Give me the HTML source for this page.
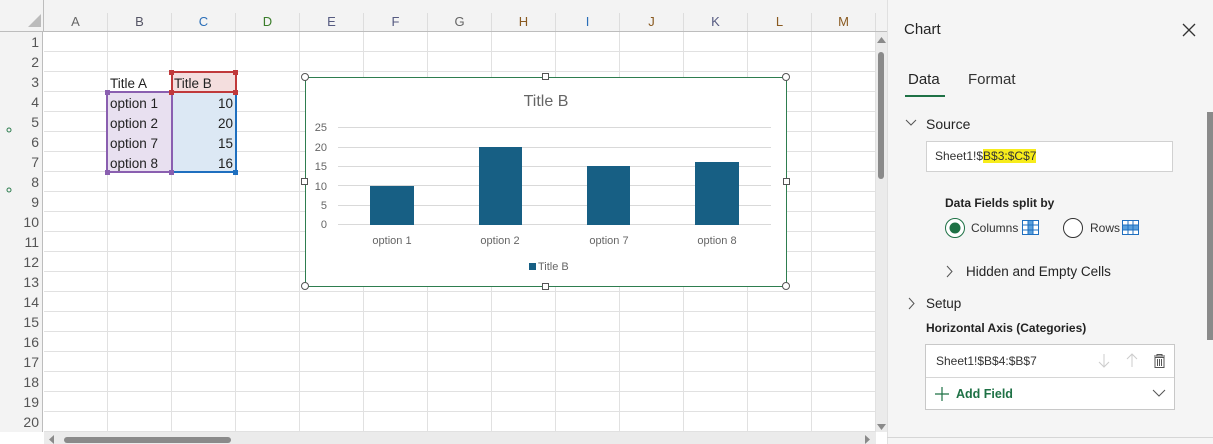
<!DOCTYPE html>
<html><head><style>
*{margin:0;padding:0;box-sizing:border-box}
body{width:1213px;height:444px;overflow:hidden;background:#fff;font-family:"Liberation Sans",sans-serif;position:relative}
.a{position:absolute}
.ch{position:absolute;top:13px;height:18px;text-align:center;font-size:13px;color:#555;line-height:18px;border-right:1px solid #ddd}
.rh{position:absolute;left:0;width:43px;height:20px;text-align:right;padding-right:4px;font-size:14px;color:#555;line-height:21px}
.cell{position:absolute;font-size:13.5px;line-height:21px;color:#222}
.p{font-size:14px;color:#242424}
</style></head><body>
<div class="a" style="left:0;top:0;width:887px;height:32px;background:#f3f3f3;border-bottom:1px solid #bdbdbd"></div>
<div class="a" style="left:0;top:32px;width:43px;height:400px;background:#f3f3f3;border-right:1px solid #bdbdbd"></div>
<div class="a" style="left:43px;top:0;width:1px;height:32px;background:#bdbdbd"></div>
<svg class="a" style="left:28px;top:14px" width="14" height="14"><polygon points="13,0 13,13 0,13" fill="#bbb"/></svg>
<div id="cols"></div>
<div id="grid" class="a" style="left:44px;top:32px;width:832px;height:400px;
background-image:linear-gradient(to right,#e1e1e1 1px,transparent 1px),linear-gradient(to bottom,#e1e1e1 1px,transparent 1px);
background-size:64px 20px;background-position:63px 19px"></div>
<div id="rows"></div>
<div class="a" style="left:108px;top:92px;width:64px;height:80px;background:#e8e0f0"></div>
<div class="a" style="left:172px;top:72px;width:64px;height:20px;background:#f4dede"></div>
<div class="a" style="left:172px;top:92px;width:64px;height:80px;background:#dce8f4"></div>
<div class="a" style="left:106px;top:91px;width:67px;height:82px;border:2px solid #8a5fb0"></div>
<div class="a" style="left:171px;top:71px;width:66px;height:22px;border:2px solid #c0393b"></div>
<div class="a" style="left:171px;top:91px;width:66px;height:82px;border:2px solid #1f6fbf;border-left:none;border-top:none"></div>
<div class="cell" style="left:110px;top:73px">Title A</div>
<div class="cell" style="left:174px;top:73px">Title B</div>
<div class="cell" style="left:110px;top:93px">option 1</div>
<div class="cell" style="left:110px;top:113px">option 2</div>
<div class="cell" style="left:110px;top:133px">option 7</div>
<div class="cell" style="left:110px;top:153px">option 8</div>
<div class="cell" style="left:172px;top:93px;width:61px;text-align:right">10</div>
<div class="cell" style="left:172px;top:113px;width:61px;text-align:right">20</div>
<div class="cell" style="left:172px;top:133px;width:61px;text-align:right">15</div>
<div class="cell" style="left:172px;top:153px;width:61px;text-align:right">16</div>
<svg class="a" style="left:104px;top:69px" width="136" height="108">
<g fill="#8a5fb0"><rect x="1" y="21" width="5" height="5"/><rect x="1" y="101" width="5" height="5"/><rect x="65" y="101" width="5" height="5"/></g>
<g fill="#c0393b"><rect x="65" y="1" width="5" height="5"/><rect x="129" y="1" width="5" height="5"/><rect x="65" y="21" width="5" height="5"/><rect x="129" y="21" width="5" height="5"/></g>
<rect x="129" y="101" width="5" height="5" fill="#1f6fbf"/>
</svg>
<svg class="a" style="left:6px;top:127px" width="8" height="66"><circle cx="3" cy="3" r="2" fill="none" stroke="#2e7d4f"/><circle cx="3" cy="63" r="2" fill="none" stroke="#2e7d4f"/></svg>
<div class="a" style="left:305px;top:77px;width:482px;height:210px;background:#fff;border:1px solid #2e7d4f"></div>
<svg class="a" style="left:300px;top:72px" width="492" height="220" font-family="Liberation Sans" >
<g stroke="#d9d9d9"><line x1="38" x2="471" y1="55.5" y2="55.5"/><line x1="38" x2="471" y1="75.5" y2="75.5"/><line x1="38" x2="471" y1="94.5" y2="94.5"/><line x1="38" x2="471" y1="113.5" y2="113.5"/><line x1="38" x2="471" y1="133.5" y2="133.5"/><line x1="38" x2="471" y1="152.5" y2="152.5"/></g>
<g font-size="11" fill="#666" text-anchor="end"><text x="27" y="59">25</text><text x="27" y="79">20</text><text x="27" y="98">15</text><text x="27" y="118">10</text><text x="27" y="137">5</text><text x="27" y="156">0</text></g>
<g fill="#175f84"><rect x="70" y="114" width="44" height="39"/><rect x="179" y="75" width="43" height="78"/><rect x="287" y="94" width="43" height="59"/><rect x="395" y="90" width="44" height="63"/></g>
<g font-size="11" fill="#666" text-anchor="middle"><text x="92" y="172">option 1</text><text x="200" y="172">option 2</text><text x="309" y="172">option 7</text><text x="417" y="172">option 8</text></g>
<text x="246" y="34" font-size="16" fill="#666" text-anchor="middle">Title B</text>
<rect x="229" y="191" width="7" height="7" fill="#175f84"/><text x="238" y="198" font-size="11" fill="#666">Title B</text>
<g fill="#fff" stroke="#555"><circle cx="5" cy="5" r="3.5"/><circle cx="486" cy="5" r="3.5"/><circle cx="5" cy="214" r="3.5"/><circle cx="486" cy="214" r="3.5"/>
<rect x="242.5" y="1.5" width="6" height="6"/><rect x="242.5" y="211.5" width="6" height="6"/><rect x="1.5" y="106.5" width="6" height="6"/><rect x="483.5" y="106.5" width="6" height="6"/></g>
</svg>
<div class="a" style="left:876px;top:32px;width:11px;height:400px;background:#ebebeb"></div>
<div class="a" style="left:878px;top:52px;width:6px;height:127px;background:#8a8a8a;border-radius:3px"></div>
<svg class="a" style="left:876px;top:36px" width="11" height="8"><polygon points="5.5,1 10,7 1,7" fill="#8a8a8a"/></svg>
<svg class="a" style="left:876px;top:423px" width="11" height="8"><polygon points="5.5,7 10,1 1,1" fill="#8a8a8a"/></svg>
<div class="a" style="left:44px;top:432px;width:832px;height:12px;background:#ebebeb"></div>
<div class="a" style="left:64px;top:437px;width:167px;height:6px;background:#8a8a8a;border-radius:3px"></div>
<svg class="a" style="left:48px;top:435px" width="8" height="9"><polygon points="1,4.5 6,0 6,9" fill="#8a8a8a"/></svg>
<svg class="a" style="left:863px;top:435px" width="8" height="9"><polygon points="7,4.5 2,0 2,9" fill="#8a8a8a"/></svg>
<div class="a" style="left:887px;top:0;width:326px;height:444px;background:#f5f5f5;border-left:1px solid #e0e0e0"></div>
<div class="a" style="left:887px;top:437px;width:326px;height:1px;background:#d6d6d6"></div>
<div class="a" style="left:1207px;top:112px;width:6px;height:228px;background:#8a8a8a"></div>
<div class="a p" style="left:904px;top:21px;font-size:15px">Chart</div>
<svg class="a" style="left:1182px;top:23px" width="14" height="14"><path d="M1 1L13 13M13 1L1 13" stroke="#333" stroke-width="1.3"/></svg>
<div class="a p" style="left:908px;top:71px;font-size:15px">Data</div>
<div class="a p" style="left:968px;top:71px;font-size:15px;color:#333">Format</div>
<div class="a" style="left:905px;top:95px;width:40px;height:2px;background:#1e7145"></div>
<svg class="a" style="left:905px;top:119px" width="12" height="8"><path d="M1 1L6 6L11 1" stroke="#555" fill="none"/></svg>
<div class="a p" style="left:926px;top:116px">Source</div>
<div class="a" style="left:926px;top:141px;width:247px;height:31px;background:#fff;border:1px solid #d1d1d1"></div>
<div class="a" style="left:935px;top:149px;font-size:12px;color:#333;line-height:15px">Sheet1!$<span style="background:#f7ec1b">B$3:$C$7</span></div>
<div class="a" style="left:945px;top:196px;font-size:12px;color:#222;font-weight:600">Data Fields split by</div>
<svg class="a" style="left:944px;top:217px" width="22" height="22"><circle cx="11" cy="11" r="9.5" fill="#fff" stroke="#1e7145"/><circle cx="11" cy="11" r="5.5" fill="#1e7145"/></svg>
<div class="a" style="left:971px;top:221px;font-size:12px;color:#333">Columns</div>
<svg class="a" style="left:1022px;top:220px" width="17" height="15"><rect x="0.5" y="0.5" width="16" height="14" fill="#fff" stroke="#1f6fbf"/><rect x="6" y="1" width="5" height="13" fill="#5aa0dd"/><path d="M6 .5V15M11 .5V15M.5 5h16M.5 10h16" stroke="#1f6fbf"/></svg>
<svg class="a" style="left:1062px;top:217px" width="22" height="22"><circle cx="11" cy="11" r="9.5" fill="#fff" stroke="#333"/></svg>
<div class="a" style="left:1090px;top:221px;font-size:12px;color:#333">Rows</div>
<svg class="a" style="left:1122px;top:220px" width="17" height="15"><rect x="0.5" y="0.5" width="16" height="14" fill="#fff" stroke="#1f6fbf"/><rect x="1" y="5" width="15" height="5" fill="#5aa0dd"/><path d="M6 .5V15M11 .5V15M.5 5h16M.5 10h16" stroke="#1f6fbf"/></svg>
<svg class="a" style="left:946px;top:265px" width="8" height="13"><path d="M1 1L6 6.5L1 12" stroke="#555" fill="none"/></svg>
<div class="a p" style="left:966px;top:264px;font-size:13.5px">Hidden and Empty Cells</div>
<svg class="a" style="left:908px;top:297px" width="8" height="13"><path d="M1 1L6 6.5L1 12" stroke="#555" fill="none"/></svg>
<div class="a p" style="left:926px;top:296px;font-size:13.5px">Setup</div>
<div class="a" style="left:926px;top:321px;font-size:12px;color:#222;font-weight:600">Horizontal Axis (Categories)</div>
<div class="a" style="left:925px;top:344px;width:250px;height:66px;background:#fff;border:1px solid #c8c8c8"></div>
<div class="a" style="left:926px;top:377px;width:248px;height:1px;background:#d6d6d6"></div>
<div class="a" style="left:936px;top:354px;font-size:12px;color:#333">Sheet1!$B$4:$B$7</div>
<svg class="a" style="left:1098px;top:353px" width="70" height="16"><path d="M6 1V14M1 9L6 14L11 9M34 14V1M29 6L34 1L39 6" stroke="#ccc" fill="none"/><path d="M56 3h11M59 3V1.5h5V3M57 4.5h9V14.5h-9z M59.5 6v7M61.5 6v7M63.5 6v7" stroke="#555" fill="none"/></svg>
<svg class="a" style="left:935px;top:387px" width="14" height="14"><path d="M7 0V14M0 7H14" stroke="#1e7145" stroke-width="1.2"/></svg>
<div class="a" style="left:956px;top:387px;font-size:12.5px;color:#1e7145;font-weight:600">Add Field</div>
<svg class="a" style="left:1152px;top:389px" width="14" height="9"><path d="M1 1L7 7L13 1" stroke="#555" fill="none"/></svg>
<script>
var cols="ABCDEFGHIJKLM",cc=["#666","#556","#2a6eb8","#3a7d2a","#555a80","#555a80","#666","#8a5a20","#2a6eb8","#8a5a20","#555a80","#8a5a20","#8a5a20"],h="";
for(var i=0;i<13;i++)h+='<div class="ch" style="left:'+(44+i*64)+'px;width:64px;color:'+cc[i]+'">'+cols[i]+'</div>';
document.getElementById("cols").innerHTML=h;h="";
for(var r=1;r<=20;r++)h+='<div class="rh" style="top:'+(32+(r-1)*20)+'px">'+r+'</div>';
document.getElementById("rows").innerHTML=h;
</script>
</body></html>
